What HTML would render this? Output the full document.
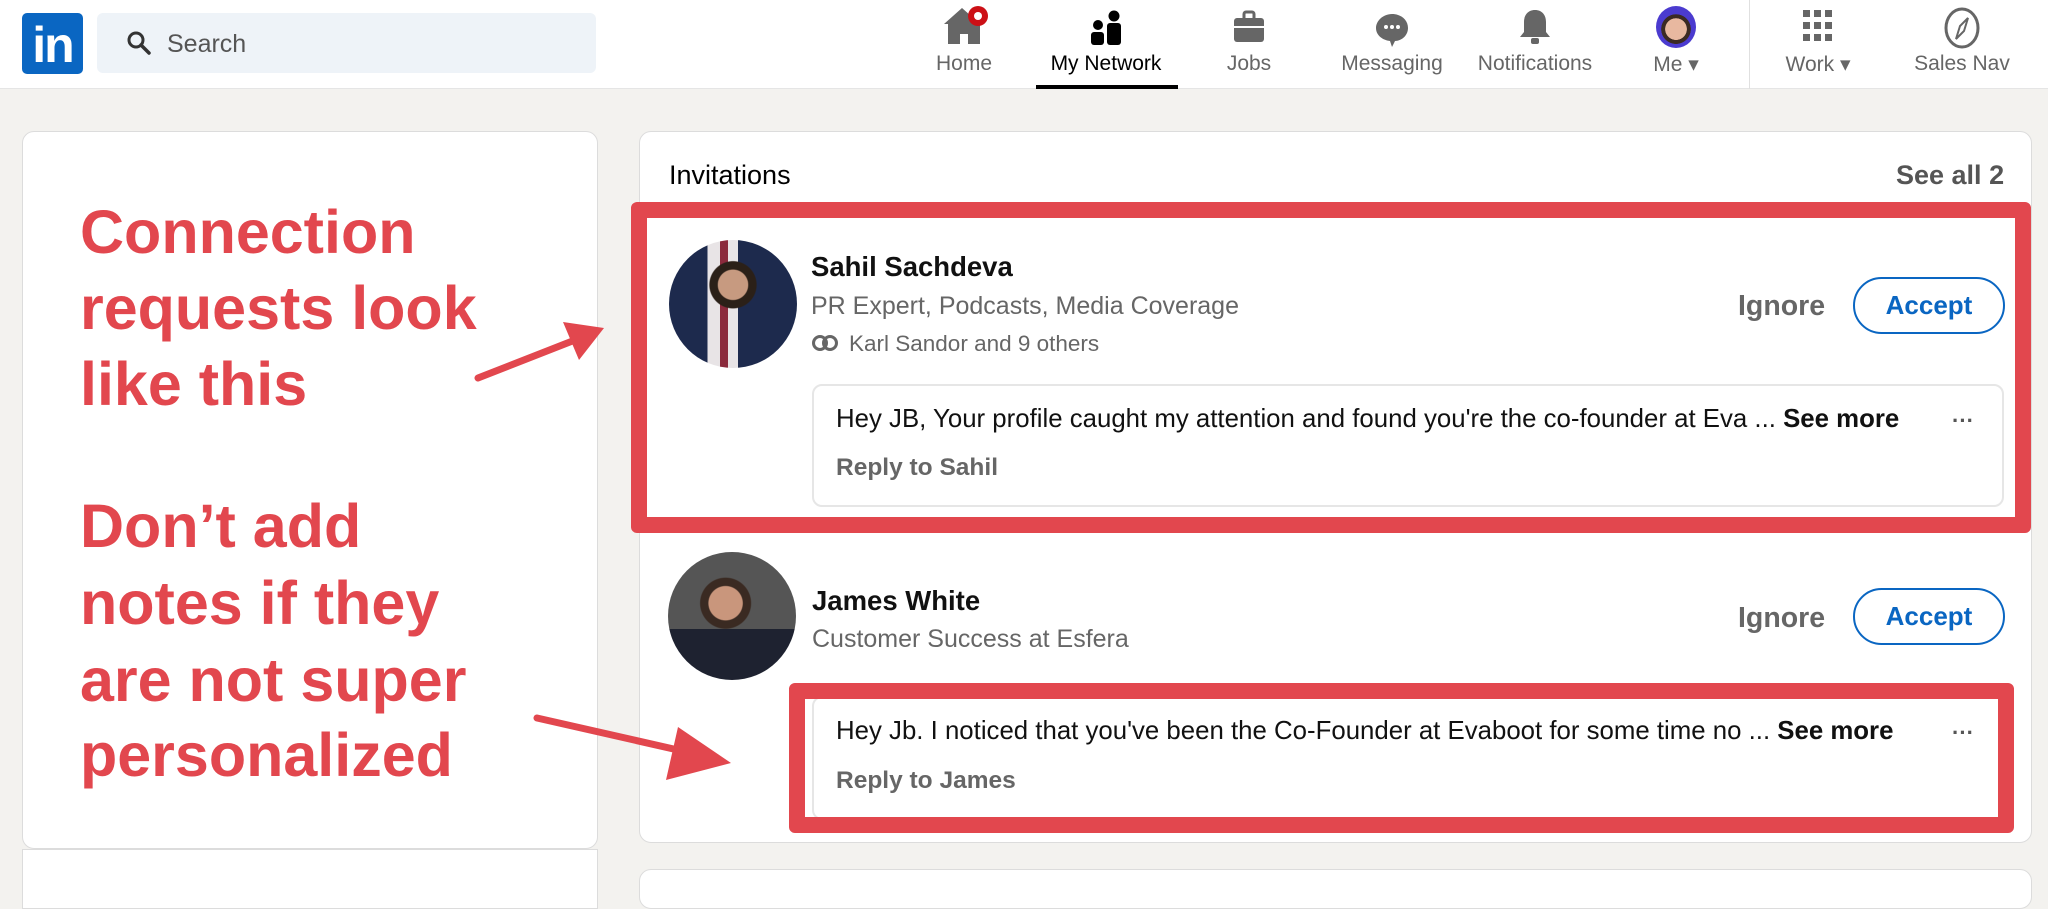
<!DOCTYPE html>
<html><head><meta charset="utf-8"><style>
*{margin:0;padding:0;box-sizing:border-box}
body{width:2048px;height:877px;background:#f3f2ef;font-family:"Liberation Sans",sans-serif;position:relative;overflow:hidden}
.abs{position:absolute}
.hdr{left:0;top:0;width:2048px;height:89px;background:#fff;border-bottom:1px solid #e5e5e5}
.nav{position:absolute;top:0;height:89px;text-align:center;color:#666;font-size:21px}
.nav .lbl{position:absolute;left:-90px;width:180px;top:52px;white-space:nowrap}
.card{background:#fff;border:1px solid #dcdcdc;border-radius:12px}
.red{border:16px solid #e2474e;border-radius:6px}
.anno{color:#e2474e;font-weight:bold;font-size:61px;left:80px;white-space:nowrap;line-height:61px}
.t{white-space:nowrap}
.btn{border:2px solid #0a66c2;border-radius:30px;color:#0a66c2;font-weight:bold;font-size:26px;text-align:center}
.msg{font-size:25.8px;color:#111}
</style></head><body>
<div class="abs hdr"></div>
<div class="abs" style="left:22px;top:13px;width:61px;height:61px;background:#0a66c2;border-radius:5px;color:#fff;font-weight:bold;font-size:50px;line-height:64px;text-align:center;letter-spacing:-2px">in</div>
<div class="abs" style="left:97px;top:13px;width:499px;height:60px;background:#eef3f8;border-radius:6px"></div>
<svg class="abs" style="left:126px;top:30px" width="26" height="26" viewBox="0 0 26 26"><circle cx="10" cy="10" r="7" fill="none" stroke="#333" stroke-width="3"/><path d="M15 15l8 8" stroke="#333" stroke-width="3.5" stroke-linecap="round"/></svg>
<div class="abs t" style="left:167px;top:30px;font-size:25px;color:#555">Search</div>

<div class="nav" style="left:964px"><svg class="abs" style="left:-22px;top:4px" width="50" height="44" viewBox="0 0 50 44"><path d="M2 20L20 4l18 16v20H26V30h-8v10H6V20z" fill="#666"/><circle cx="36" cy="12" r="10" fill="#cc1016"/><circle cx="36" cy="12" r="4" fill="#fff"/></svg><div class="lbl">Home</div></div>
<div class="nav" style="left:1106px;color:#000"><svg class="abs" style="left:-17px;top:10px" width="36" height="36" viewBox="0 0 36 36"><circle cx="25" cy="6" r="5.5" fill="#000"/><circle cx="9" cy="15" r="5" fill="#000"/><rect x="18" y="13" width="14" height="22" rx="3" fill="#000"/><rect x="2" y="22" width="13" height="13" rx="3" fill="#000"/></svg><div class="lbl">My Network</div></div>
<div class="abs" style="left:1036px;top:85px;width:142px;height:4px;background:#000"></div>
<div class="nav" style="left:1249px"><svg class="abs" style="left:-17px;top:10px" width="34" height="34" viewBox="0 0 34 34"><rect x="12" y="2" width="10" height="8" rx="2" fill="none" stroke="#666" stroke-width="3"/><rect x="2" y="8" width="30" height="24" rx="3" fill="#666"/><path d="M2 17h30" stroke="#fff" stroke-width="2"/></svg><div class="lbl">Jobs</div></div>
<div class="nav" style="left:1392px"><svg class="abs" style="left:-18px;top:12px" width="36" height="36" viewBox="0 0 36 36"><path d="M18 2c9 0 16 6 16 14s-7 13-13 13l-3 6-2-6C8 28 2 23 2 16S9 2 18 2z" fill="#666"/><circle cx="12" cy="15" r="2" fill="#fff"/><circle cx="18" cy="15" r="2" fill="#fff"/><circle cx="24" cy="15" r="2" fill="#fff"/></svg><div class="lbl">Messaging</div></div>
<div class="nav" style="left:1535px"><svg class="abs" style="left:-16px;top:8px" width="32" height="38" viewBox="0 0 32 38"><path d="M16 2c7 0 11 5 11 12v10l4 5H1l4-5V14C5 7 9 2 16 2z" fill="#666"/><rect x="12" y="30" width="8" height="6" rx="2" fill="#666"/></svg><div class="lbl">Notifications</div></div>
<div class="nav" style="left:1676px"><div class="abs" style="left:-20px;top:6px;width:40px;height:42px;border-radius:50%;background:radial-gradient(circle at 50% 55%,#e8b8a0 0 35%,#3b2a23 36% 48%,#4b3bcf 49%)"></div><div class="lbl">Me ▾</div></div>
<div class="abs" style="left:1749px;top:0;width:1px;height:89px;background:#e0e0e0"></div>
<div class="nav" style="left:1818px"><svg class="abs" style="left:-15px;top:10px" width="30" height="32" viewBox="0 0 30 32"><g fill="#666"><rect x="0" y="0" width="7" height="7"/><rect x="11" y="0" width="7" height="7"/><rect x="22" y="0" width="7" height="7"/><rect x="0" y="12" width="7" height="7"/><rect x="11" y="12" width="7" height="7"/><rect x="22" y="12" width="7" height="7"/><rect x="0" y="24" width="7" height="7"/><rect x="11" y="24" width="7" height="7"/><rect x="22" y="24" width="7" height="7"/></g></svg><div class="lbl">Work ▾</div></div>
<div class="nav" style="left:1962px"><svg class="abs" style="left:-19px;top:6px" width="38" height="44" viewBox="0 0 38 44"><ellipse cx="19" cy="22" rx="16" ry="19" fill="none" stroke="#666" stroke-width="3"/><path d="M25 12l-4 13-8 8 4-13z" fill="none" stroke="#666" stroke-width="2"/></svg><div class="lbl">Sales Nav</div></div>

<div class="abs card" style="left:22px;top:131px;width:576px;height:718px"></div>
<div class="abs card" style="left:22px;top:849px;width:576px;height:60px;border-radius:0"></div>
<div class="abs anno t" style="top:202px">Connection</div>
<div class="abs anno t" style="top:278px">requests look</div>
<div class="abs anno t" style="top:354px">like this</div>
<div class="abs anno t" style="top:496px">Don’t add</div>
<div class="abs anno t" style="top:573px">notes if they</div>
<div class="abs anno t" style="top:650px">are not super</div>
<div class="abs anno t" style="top:725px">personalized</div>

<div class="abs card" style="left:639px;top:131px;width:1393px;height:712px"></div>
<div class="abs card" style="left:639px;top:869px;width:1393px;height:40px"></div>
<div class="abs t" style="left:669px;top:160px;font-size:27px;color:#000">Invitations</div>
<div class="abs t" style="left:1896px;top:160px;font-size:27px;color:#555;font-weight:bold">See all 2</div>

<div class="abs" style="left:669px;top:240px;width:128px;height:128px;border-radius:50%;background:radial-gradient(circle at 50% 35%,#c79a80 0 14%,#2b2018 15% 22%,transparent 23%),linear-gradient(90deg,#1d2a4d 0 30%,#e8e4e6 30% 40%,#8b2a3c 40% 46%,#e8e4e6 46% 54%,#1d2a4d 54%);"></div>
<div class="abs t" style="left:811px;top:251px;font-size:27.5px;font-weight:bold;color:#111">Sahil Sachdeva</div>
<div class="abs t" style="left:811px;top:292px;font-size:25px;color:#666">PR Expert, Podcasts, Media Coverage</div>
<svg class="abs" style="left:811px;top:334px" width="28" height="18" viewBox="0 0 28 18"><circle cx="9" cy="9" r="6.5" fill="none" stroke="#666" stroke-width="3"/><circle cx="19" cy="9" r="6.5" fill="none" stroke="#666" stroke-width="3"/></svg>
<div class="abs t" style="left:849px;top:331px;font-size:22.5px;color:#666">Karl Sandor and 9 others</div>
<div class="abs t" style="left:1738px;top:290px;font-size:28.5px;font-weight:bold;color:#666">Ignore</div>
<div class="abs btn" style="left:1853px;top:277px;width:152px;height:57px;line-height:53px">Accept</div>
<div class="abs" style="left:812px;top:384px;width:1192px;height:123px;border:2px solid #e6e6e6;border-radius:10px"></div>
<div class="abs t msg" style="left:836px;top:405px">Hey JB, Your profile caught my attention and found you're the co-founder at Eva ... <b>See more</b></div>
<div class="abs t" style="left:836px;top:454px;font-size:24.5px;color:#666;font-weight:bold">Reply to Sahil</div>
<div class="abs t" style="left:1952px;top:408px;font-size:22px;color:#555;font-weight:bold">···</div>
<div class="abs red" style="left:631px;top:202px;width:1400px;height:331px"></div>

<div class="abs" style="left:668px;top:552px;width:128px;height:128px;border-radius:50%;background:radial-gradient(circle at 45% 40%,#c9967c 0 16%,#3a2a22 17% 24%,transparent 25%),linear-gradient(180deg,#555 0 60%,#1e2230 60%)"></div>
<div class="abs t" style="left:812px;top:585px;font-size:27.5px;font-weight:bold;color:#111">James White</div>
<div class="abs t" style="left:812px;top:625px;font-size:25px;color:#666">Customer Success at Esfera</div>
<div class="abs t" style="left:1738px;top:602px;font-size:28.5px;font-weight:bold;color:#666">Ignore</div>
<div class="abs btn" style="left:1853px;top:588px;width:152px;height:57px;line-height:53px">Accept</div>
<div class="abs" style="left:812px;top:696px;width:1192px;height:124px;border:2px solid #e6e6e6;border-radius:10px"></div>
<div class="abs t msg" style="left:836px;top:717px">Hey Jb. I noticed that you've been the Co-Founder at Evaboot for some time no ... <b>See more</b></div>
<div class="abs t" style="left:836px;top:767px;font-size:24.5px;color:#666;font-weight:bold">Reply to James</div>
<div class="abs t" style="left:1952px;top:720px;font-size:22px;color:#555;font-weight:bold">···</div>
<div class="abs red" style="left:789px;top:683px;width:1225px;height:150px"></div>

<svg class="abs" style="left:0;top:0" width="2048" height="877">
<line x1="478" y1="378" x2="575" y2="340" stroke="#e2474e" stroke-width="7" stroke-linecap="round"/>
<polygon points="604,328 563,322 579,360" fill="#e2474e"/>
<line x1="537" y1="718" x2="700" y2="755" stroke="#e2474e" stroke-width="7" stroke-linecap="round"/>
<polygon points="731,763 678,727 666,780" fill="#e2474e"/>
</svg>
</body></html>
